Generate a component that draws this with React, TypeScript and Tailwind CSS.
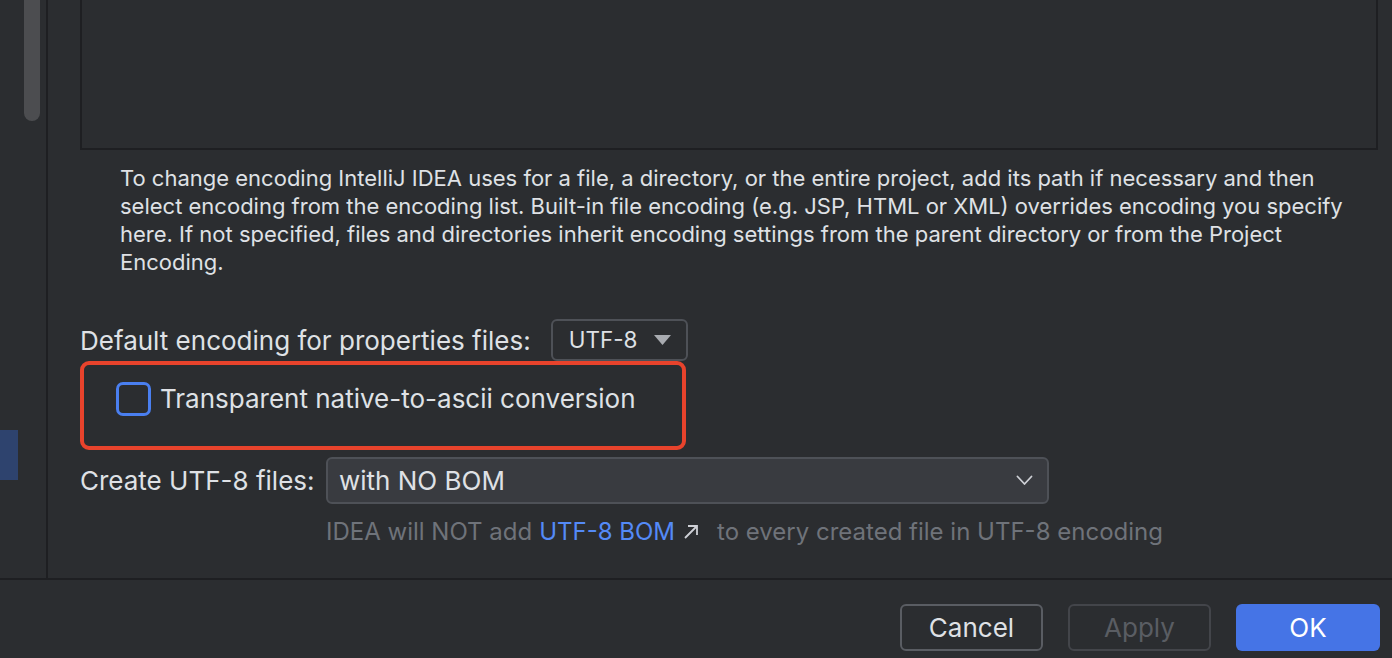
import React from 'react'

const font = { fontFamily: 'Inter, "Noto Sans", sans-serif' }

const App = () => {
    return (
        <div className="w-[1392px] h-[658px] bg-[#2b2d30] flex flex-col overflow-hidden text-[#dfe1e5]" style={font}>
            <div className="flex flex-row h-[580px] border-b-2 border-[#1e1f22]">
                {/* left tree strip */}
                <div className="relative w-[46px] h-full border-r-2 border-[#1e1f22] shrink-0 box-content">
                    <div className="absolute left-[24px] top-[-20px] w-[16px] h-[141px] rounded-full bg-[#4c4d50]" />
                    <div className="absolute left-0 top-[430px] w-[18px] h-[50px] bg-[#2e436e]" />
                </div>

                <div className="flex flex-col flex-1 pl-[32px] pr-[14px]">
                    <div className="h-[150px] border-x-2 border-b-2 border-[#1e1f22] shrink-0" />

                    <p className="pl-[40px] pr-[30px] mt-[14px] text-[22px] leading-[28px] text-[#dfe1e5]">
                        To change encoding IntelliJ IDEA uses for a file, a directory, or the entire project, add its path if necessary and then select encoding from the encoding list. Built-in file encoding (e.g. JSP, HTML or XML) overrides encoding you specify here. If not specified, files and directories inherit encoding settings from the parent directory or from the Project Encoding.
                    </p>

                    <div className="flex items-center gap-[20px] mt-[43px] h-[42px]">
                        <span className="text-[26px]">Default encoding for properties files:</span>
                        <div className="flex items-center gap-[16px] h-[42px] w-[137px] pl-[16px] border-2 border-[#4e5157] rounded-[6px]">
                            <span className="text-[22.5px]">UTF-8</span>
                            <svg width="17" height="11" viewBox="0 0 17 11">
                                <path d="M0 0 H17 L8.5 10 Z" fill="#a8abb0" />
                            </svg>
                        </div>
                    </div>

                    <div className="w-[606px] h-[89px] border-[4px] border-[#e8432c] rounded-[9px] flex items-start pt-[17px] pl-[32px] gap-[9px]">
                        <div className="w-[35px] h-[34px] border-[3px] border-[#4a7ff0] rounded-[7px]" />
                        <span className="text-[26px] leading-[34px]">Transparent native-to-ascii conversion</span>
                    </div>

                    <div className="flex items-center gap-[10px] mt-[7px]">
                        <span className="w-[236px] text-[26px] whitespace-nowrap">Create UTF-8 files:</span>
                        <div className="flex items-center justify-between w-[723px] h-[47px] bg-[#393b40] border-2 border-[#4e5157] rounded-[6px] pl-[11px] pr-[14px]">
                            <span className="text-[26px]">with NO BOM</span>
                            <svg width="17" height="11" viewBox="0 0 17 11" fill="none">
                                <path d="M1.5 1.5 L8.5 9 L15.5 1.5" stroke="#ced0d6" strokeWidth="1.8" strokeLinecap="round" strokeLinejoin="round" />
                            </svg>
                        </div>
                    </div>

                    <div className="flex items-center pl-[246px] mt-[10px] text-[24px] text-[#6f737a]">
                        <span>IDEA will NOT add</span>
                        <span className="ml-[7px] text-[#548af7]">UTF-8 BOM</span>
                        <svg className="ml-[8px]" width="16" height="16" viewBox="0 0 16 16" fill="none">
                            <path d="M2 14 L14 2 M5 2 H14 V11" stroke="#ced0d6" strokeWidth="1.8" />
                        </svg>
                        <span className="ml-[18px]">to every created file in UTF-8 encoding</span>
                    </div>
                </div>
            </div>

            <div className="flex flex-row justify-end items-start gap-[25px] pt-[24px] pr-[12px]">
                <button className="w-[143px] h-[47px] border-2 border-[#5a5d63] rounded-[6px] text-[26px] text-[#dfe1e5]">Cancel</button>
                <button className="w-[143px] h-[47px] border-2 border-[#43454a] rounded-[6px] text-[26px] text-[#5a5d63]">Apply</button>
                <button className="w-[144px] h-[47px] bg-[#4574e6] rounded-[6px] text-[26px] text-white">OK</button>
            </div>
        </div>
    )
}

export default App
